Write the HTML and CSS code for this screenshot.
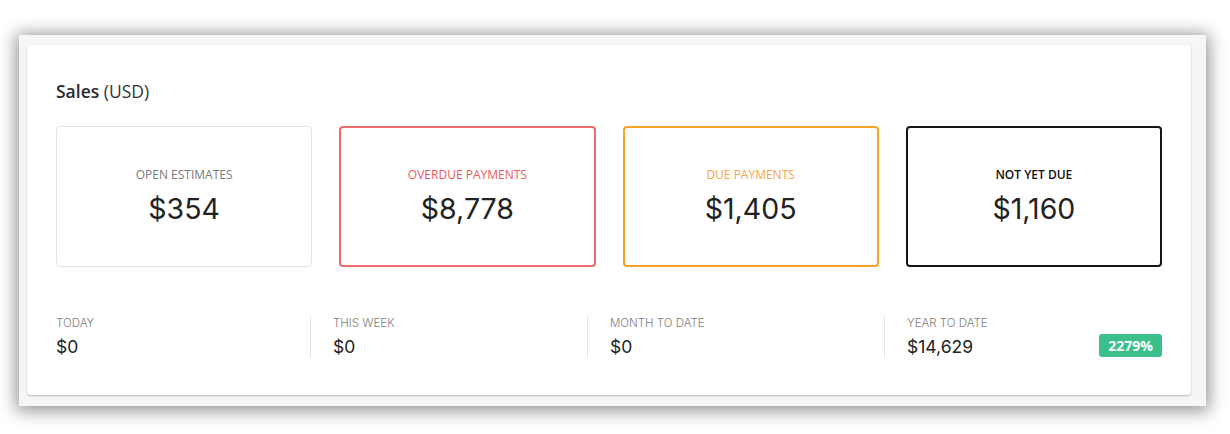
FILE: index.html
```html
<html>
<head>
<meta charset="utf-8">
<link rel="stylesheet" href="styles.css">
</head>
<body>
<div id="frame">
<div id="sales">
	<h2 class="title"><b>Sales</b> (USD)</h2>
	<div class="boxes">
		<div class="box box-open">
			<div class="boxLabel">Open Estimates</div>
			<div class="boxValue">$354</div>
		</div>
		<div class="box box-overdue">
			<div class="boxLabel">Overdue Payments</div>
			<div class="boxValue">$8,778</div>
		</div>
		<div class="box box-due">
			<div class="boxLabel">Due Payments</div>
			<div class="boxValue">$1,405</div>
		</div>
		<div class="box box-notdue">
			<div class="boxLabel">Not Yet Due</div>
			<div class="boxValue">$1,160</div>
		</div>
	</div>
	<div class="stats">
		<div class="stat">
			<div class="statLabel">Today</div>
			<div class="statValue">$0</div>
		</div>
		<div class="stat">
			<div class="statLabel">This Week</div>
			<div class="statValue">$0</div>
		</div>
		<div class="stat">
			<div class="statLabel">Month to Date</div>
			<div class="statValue">$0</div>
		</div>
		<div class="stat stat-last">
			<div>
				<div class="statLabel">Year to Date</div>
				<div class="statValue">$14,629</div>
			</div>
			<span class="badge">2279%</span>
		</div>
	</div>
</div>
</div>
</body>
</html>
```

FILE: styles.css
```css
body
{
	margin: 0;
	background-color: #ffffff;
	font-family: "Open Sans", sans-serif;
	color: #222222;
}
#frame
{
	box-sizing: border-box;
	width: 1187px;
	margin: 35px 0 0 19px;
	padding: 10px 15px 11px 8px;
	background-color: #f5f6f8;
	box-shadow: 0 2px 16px 3px rgba(0, 0, 0, 0.42);
}
#sales
{
	background-color: #ffffff;
	border-radius: 4px;
	box-shadow: 0 1px 2px rgba(0, 0, 0, 0.25);
	padding: 35px 29px 37px 29px;
}
.title
{
	margin: 0;
	font-size: 17.5px;
	line-height: 22px;
	font-weight: 400;
	color: #333333;
}
.title b
{
	font-weight: 600;
	color: #2a2a2a;
}
.boxes
{
	display: grid;
	grid-template-columns: repeat(4, 1fr);
	column-gap: 27px;
	margin-top: 24px;
}
.box
{
	box-sizing: border-box;
	height: 141px;
	border-radius: 4px;
	display: flex;
	flex-direction: column;
	align-items: center;
	justify-content: center;
	text-align: center;
}
.boxLabel
{
	font-size: 12px;
	line-height: 16px;
	text-transform: uppercase;
	color: #7a7a7a;
	margin-bottom: 9px;
}
.boxValue
{
	font-family: Inter, "Noto Sans", sans-serif;
	font-size: 28.5px;
	line-height: 34px;
	color: #222222;
}
.box-open
{
	border: 1px solid #dfe3ea;
}
.box-overdue
{
	border: 2px solid #ec6b6b;
}
.box-overdue .boxLabel
{
	color: #ea5a5a;
}
.box-due
{
	border: 2px solid #f8a325;
}
.box-due .boxLabel
{
	color: #f6a445;
}
.box-notdue
{
	border: 2px solid #151515;
}
.box-notdue .boxLabel
{
	color: #111111;
	font-weight: 600;
}
.stats
{
	display: grid;
	grid-template-columns: 254px 277px 297px 1fr;
	margin-top: 49px;
}
.stat + .stat
{
	border-left: 1px solid #e4e4e4;
	padding-left: 22px;
}
.statLabel
{
	font-family: Inter, "Noto Sans", sans-serif;
	font-size: 11.5px;
	line-height: 14px;
	font-weight: 300;
	text-transform: uppercase;
	color: #7d7d7d;
}
.statValue
{
	font-family: Inter, "Noto Sans", sans-serif;
	font-size: 17.5px;
	line-height: 22px;
	margin-top: 6px;
	color: #222222;
}
.stat-last
{
	display: flex;
	justify-content: space-between;
	align-items: flex-end;
}
.badge
{
	display: inline-block;
	width: 63px;
	height: 23px;
	line-height: 23px;
	margin-bottom: 1px;
	text-align: center;
	background-color: #3bc08c;
	border-radius: 3px;
	color: #ffffff;
	font-size: 14px;
	font-weight: 700;
}
```
